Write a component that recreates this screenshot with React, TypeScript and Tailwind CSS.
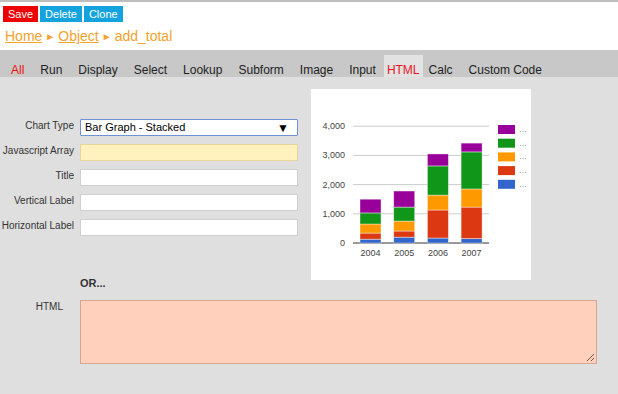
import type { ReactNode } from 'react';

const tabs = ['All', 'Run', 'Display', 'Select', 'Lookup', 'Subform', 'Image', 'Input', 'HTML', 'Calc', 'Custom Code'];

const colors = ['#3366cc', '#dc3912', '#ff9900', '#109618', '#990099'];

const data: { year: string; values: number[] }[] = [
  { year: '2004', values: [130, 210, 310, 380, 470] },
  { year: '2005', values: [200, 210, 340, 480, 550] },
  { year: '2006', values: [170, 960, 510, 1000, 410] },
  { year: '2007', values: [150, 1080, 620, 1270, 300] },
];

function Chart() {
  const base = 154;
  const k = 0.0292;
  const grid = [0, 1000, 2000, 3000, 4000];
  return (
    <svg width="220" height="191" viewBox="0 0 220 191" className="block">
      {grid.map((g) => (
        <g key={g}>
          <line
            x1="42"
            x2="178"
            y1={base - g * k}
            y2={base - g * k}
            stroke={g === 0 ? '#333' : '#ccc'}
            strokeWidth="1"
          />
          <text x="34" y={base - g * k + 3} textAnchor="end" fontSize="9" fill="#444" fontFamily="Liberation Sans, Arial, sans-serif">
            {g === 0 ? '0' : g.toLocaleString('en-US')}
          </text>
        </g>
      ))}
      {data.map((d, i) => {
        const x = 49 + i * 33.7;
        let acc = 0;
        return (
          <g key={d.year}>
            {d.values.map((v, j) => {
              const y0 = base - acc * k;
              acc += v;
              const y1 = base - acc * k;
              return (
                <rect
                  key={j}
                  x={x}
                  y={y1}
                  width="21"
                  height={y0 - y1}
                  fill={colors[j]}
                  stroke="#ffffff"
                  strokeOpacity="0.5"
                  strokeWidth="0.8"
                />
              );
            })}
            <text x={x + 10.5} y="167" textAnchor="middle" fontSize="9" fill="#444" fontFamily="Liberation Sans, Arial, sans-serif">
              {d.year}
            </text>
          </g>
        );
      })}
      {[4, 3, 2, 1, 0].map((c, i) => (
        <g key={c}>
          <rect x="187" y={36 + i * 13.7} width="17" height="9" fill={colors[c]} />
          <text x="208" y={43 + i * 13.7} fontSize="8" fill="#555" fontFamily="Liberation Sans, Arial, sans-serif">
            …
          </text>
        </g>
      ))}
    </svg>
  );
}

function Row({ label, children }: { label: string; children: ReactNode }) {
  return (
    <div className="flex items-start">
      <div className="w-[74px] shrink-0 whitespace-nowrap text-right text-[10px] leading-[12px] text-[#333] pt-[1px]">
        {label}
      </div>
      <div className="ml-[6px] w-[218px]">{children}</div>
    </div>
  );
}

const inputCls = 'block h-[17px] w-full border border-[#cfcfcf] bg-white';

export default function App() {
  return (
    <div className="h-[394px] w-[618px] overflow-hidden bg-[#dfdfdf] font-['Liberation_Sans',Arial,sans-serif]">
      <div className="border-t-2 border-[#bdbdbd] bg-white px-[3px] pb-[5px] pt-[4px]">
        <div className="flex gap-[2px]">
          <button className="h-[16px] bg-[#ee0000] px-[5px] text-[11px] leading-[16px] text-white">Save</button>
          <button className="h-[16px] bg-[#15a3e0] px-[5px] text-[11px] leading-[16px] text-white">Delete</button>
          <button className="h-[16px] bg-[#15a3e0] px-[5px] text-[11px] leading-[16px] text-white">Clone</button>
        </div>
        <div className="mt-[6px] flex items-center pl-[2px] text-[14px] leading-[17px] text-[#f3a22b]">
          <span className="underline">Home</span>
          <span className="mx-[3px] text-[10px]">►</span>
          <span className="underline">Object</span>
          <span className="mx-[3px] text-[10px]">►</span>
          <span>add_total</span>
        </div>
      </div>
      <div className="flex h-[27px] items-end gap-[10px] bg-[#c8c8c8] pl-[8px]">
        {tabs.map((t) => (
          <div
            key={t}
            className={`h-[22px] px-[3px] pt-[8px] text-[12px] leading-[14px] ${
              t === 'HTML'
                ? 'ml-[-5px] mr-[-7px] bg-[#e2e2e2] text-[#e8141e]'
                : t === 'All'
                  ? 'text-[#ee1111]'
                  : 'text-[#222]'
            }`}
          >
            {t}
          </div>
        ))}
      </div>
      <div className="pt-[12px]">
        <div className="flex">
          <div className="flex w-[298px] flex-col gap-[8px] pt-[30px]">
            <Row label="Chart Type">
              <div className="flex h-[17px] items-center justify-between rounded-[1px] border border-[#7090d8] bg-white pl-[4px] pr-[8px] text-[11px] text-black">
                <span>Bar Graph - Stacked</span>
                <span className="text-[12px] leading-none">▼</span>
              </div>
            </Row>
            <Row label="Javascript Array">
              <div className="block h-[17px] w-full border border-[#e6d69a] bg-[#fff2bf]" />
            </Row>
            <Row label="Title">
              <div className={inputCls} />
            </Row>
            <Row label="Vertical Label">
              <div className={inputCls} />
            </Row>
            <Row label="Horizontal Label">
              <div className={inputCls} />
            </Row>
          </div>
          <div className="ml-[13px] h-[191px] w-[220px] bg-white">
            <Chart />
          </div>
        </div>
        <div className="mt-[-3px] pl-[80px] text-[11px] font-bold leading-[13px] text-[#333]">OR...</div>
        <div className="mt-[10px] flex items-start">
          <div className="w-[63px] pt-[1px] text-right text-[10px] leading-[12px] text-[#333]">HTML</div>
          <div className="relative ml-[17px] h-[64px] w-[517px] border border-[#d6a690] bg-[#ffd1bc]">
            <svg className="absolute bottom-[1px] right-[1px]" width="9" height="9" viewBox="0 0 9 9">
              <line x1="8" y1="1" x2="1" y2="8" stroke="#6b5a52" strokeWidth="1" />
              <line x1="8" y1="5" x2="5" y2="8" stroke="#6b5a52" strokeWidth="1" />
            </svg>
          </div>
        </div>
      </div>
    </div>
  );
}
